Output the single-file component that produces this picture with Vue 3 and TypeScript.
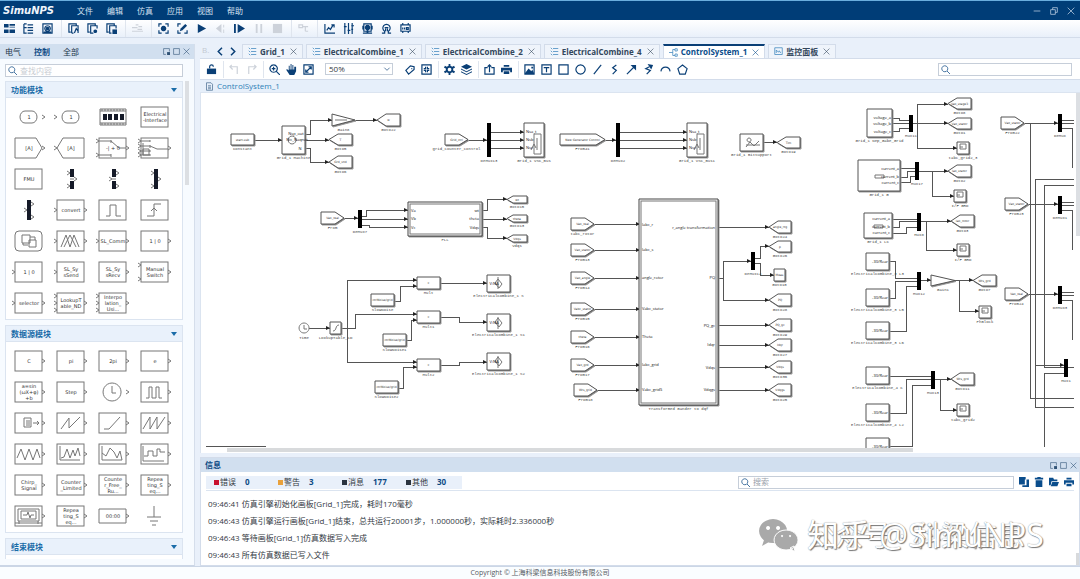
<script setup lang="ts">
import { ref } from 'vue'

interface Glyph { s?: string; f?: string }
interface Tile { t?: string[]; d?: string; f?: string; i?: number[]; o?: number[]; frame?: 'none' | 'round'; c?: boolean }
interface Block { k: string; x: number; y: number; w: number; h: number; t?: string; l?: string; lx?: number }
interface Note { x: number; y: number; t: string; a?: 'start' | 'middle' | 'end'; m?: boolean }

const glyphs: Record<string, Glyph> = {
  blocks: { f: 'M0 1h5v4H0zM6 1h6v2H6zM6 4h6v1H6zM0 7h5v4H0zM6 7h6v4H6z' },
  tree: { s: 'M1 1v10h3M1 5h3M5 2h6M5 5h6M5 8h6M5 11h6M1 1h3' },
  target: { s: 'M1 1h10v10H1zM6 3a3 3 0 1 0 .1 0M2 10h8', f: 'M6 4a2 2 0 1 0 .1 0z' },
  pageA: { s: 'M3 10H1V1h8v2M4 11V3h7v8M6 11H4M7 11l2-5 2 3' },
  pageB: { s: 'M3 10H1V1h8v2M11 6V3H4v8h3', f: 'M9 7a2 2 0 1 0 .1 0z' },
  pageC: { s: 'M3 10H1V1h8v2M11 6V3H4v8h2', f: 'M7 7h5v5H7z' },
  list: { s: 'M0 5h6M4 2h3M7 4h4M0 9h12M6 7h5' },
  gearBox: { s: 'M1 4V1h3M8 1h3v3M11 8v3H8M4 11H1V8', f: 'M6 3a3 3 0 1 0 .1 0z' },
  pencilBox: { s: 'M1 4V1h3M11 8v3H8M4 11H1V8', f: 'M3 9l1-3 5-5 2 2-5 5z' },
  play: { f: 'M2 1l9 5-9 5z' },
  back: { f: 'M7 1v10L1 6zM9 2h1v3H9zM9 7h1v4H9z' },
  step: { f: 'M0 1h2v10H0zM4 1l8 5-8 5z' },
  pause: { f: 'M3 1h2v10H3zM8 1h2v10H8z' },
  stop: { f: 'M1 1h10v10H1z' },
  flow: { s: 'M1 2h4v3H1zM5 4h3v5M8 4h3M8 9h3' },
  chart: { s: 'M1 1v10h11M3 8l2-3 2 2 3-5M8 2h3v3' },
  sliders: { s: 'M2 0v12M6 0v12M10 0v12M1 4h3M5 8h3M9 3h3M9 7h2' },
  monitor: { s: 'M2 1h8v8H2zM1 11h10M1 3v4M11 3v4', f: 'M6 2a3 3 0 1 0 .1 0zM5 8h2v3H5z' },
  magnet: { s: 'M1 11h3V9a4 4 0 1 1 4 0v2h3M5 9V6M7 9V6M4 5h4' },
  hd: { s: 'M1 2h10v7H1zM3 0v2M9 0v2M3 11V9M9 11V9M3 5v2M5 5v2M7 5h2v2H7z' },
  lock: { s: 'M4 5V3a2 2 0 0 1 4 0', f: 'M1 5h10v6H1z' },
  undo: { s: 'M3 1L1 3l3 3M1 3h8v8' },
  redo: { s: 'M9 1l2 2-3 3M11 3H3v8' },
  zoom: { s: 'M5 1a4 4 0 1 0 .1 0M8 8l4 4M3 5h4M5 3v4' },
  hand: { f: 'M3 2h1v4h1V0h1v6h1V1h1v5h1V3h2v5l-2 4H4L0 6l2 0 1 1z' },
  fit: { s: 'M1 1h10v10H1zM3 9l6-6M6 3h3v3M3 6v3h3' },
  tag: { s: 'M2 7l5-5 4 1 0 3-6 5zM8 5h1' },
  grid: { s: 'M1 1h10v10H1zM3 5h2V3M9 5H7V3M3 7h2v2M9 7H7v2' },
  gear: { f: 'M5 0h2v2l2 1 2-1 1 2-2 1v2l2 1-1 2-2-1-2 1v2H5v-2L3 9l-2 1-1-2 2-1V5L0 4l1-2 2 1 2-1zM6 4a2 2 0 1 0 .1 0z' },
  layers: { f: 'M6 0l6 3-6 3-6-3zM0 5l6 3 6-3v1L6 9 0 6zM0 8l6 3 6-3v1l-6 3-6-3z' },
  exportIcon: { s: 'M4 4H1v7h10V4H8M6 9V1M4 3l2-2 2 2' },
  print: { f: 'M3 1h6v2H3zM0 4h12v5h-2V7H2v2H0zM3 8h6v3H3z' },
  picture: { s: 'M1 1h10v10H1z', f: 'M1 10l4-5 3 3 1-2 2 4v1H1zM8 3h2v2H8z' },
  textIcon: { s: 'M1 1h10v10H1zM3 4h6M6 4v5' },
  rect: { s: 'M1 1h10v10H1z' },
  circle: { s: 'M6 1a5 5 0 1 0 .1 0z' },
  line: { s: 'M2 11l8-10' },
  curve: { s: 'M8 1L4 4l4 3-4 4' },
  arrow: { s: 'M1 11l8-8', f: 'M5 1h6v6z' },
  curveArrow: { s: 'M7 3L3 5l5 2-4 4', f: 'M5 0l6 1-2 5z' },
  arc: { s: 'M1 8c1-6 9-6 10 0' },
  pentagon: { s: 'M6 1l5 4-2 6H3L1 5z' },
  search: { s: 'M5 1a4 4 0 1 0 .1 0M8 8l4 4' },
  wave: { s: 'M4 2h7M4 6h7M4 10h7M1 1l2 2M1 5l2 2M1 9l2 2' },
  branch: { s: 'M0 6h5M5 2v8M5 2h3M5 10h3M8 1h3v3H8zM8 8h3v3H8z' },
  panelIcon: { s: 'M1 1h10v9H1zM3 8V4l3 3 1-2 2 3' },
  doc: { s: 'M2 1h6l2 2v8H2zM4 5h4M4 7h4M4 9h4' },
  close: { s: 'M1 1l10 10M11 1L1 11' },
  minimise: { s: 'M1 6h10' },
  restore: { s: 'M1 4h7v7H1zM4 4V1h7v7H8' },
  square: { s: 'M1 1h10v10H1z' },
  dock: { s: 'M5 11H1V1h10v5', f: 'M7 7h5v5H7z' },
  left: { s: 'M8 1L3 6l5 5' },
  right: { s: 'M4 1l5 5-5 5' },
  copy: { f: 'M0 0h8v3H7v6H0zM9 3h3v9H4v-2h5z' },
  trash: { f: 'M1 1h10v2H1zM4 0h4v1H4zM2 4h8v8H2z' },
  folder: { f: 'M0 1h5l1 2h4v2H3l-1 5H0zM4 6h8l-2 5H2z' },
}

const menus = ['文件', '编辑', '仿真', '应用', '视图', '帮助']
const mainTools: [string, number][][] = [
  [['blocks', 1], ['tree', 1], ['target', 1]],
  [['pageA', 1], ['pageB', 1], ['pageC', 1]],
  [['list', 0]],
  [['gearBox', 1], ['pencilBox', 1], ['play', 1], ['back', 0], ['step', 1], ['pause', 0], ['stop', 0]],
  [['flow', 0]],
  [['chart', 1], ['sliders', 1], ['monitor', 1], ['magnet', 1], ['hd', 1]],
]
const viewTools: [string, number][][] = [[['lock', 1]], [['undo', 0], ['redo', 0]], [['zoom', 1], ['hand', 1], ['fit', 1]]]
const drawTools: string[][] = [
  ['tag', 'grid'], ['gear', 'layers'], ['exportIcon', 'print'],
  ['picture', 'textIcon', 'rect', 'circle', 'line', 'curve', 'arrow', 'curveArrow', 'arc', 'pentagon'],
]
const tabs = [
  { name: 'Grid_1', icon: 'wave' },
  { name: 'ElectricalCombine_1', icon: 'wave' },
  { name: 'ElectricalCombine_2', icon: 'wave' },
  { name: 'ElectricalCombine_4', icon: 'wave' },
  { name: 'ControlSystem_1', icon: 'branch' },
  { name: '监控面板', icon: 'panelIcon' },
]
const activeTab = ref('ControlSystem_1')
const zoomLevel = ref('50%')

const functionTiles: Tile[] = [
  { t: ['1'], frame: 'none', d: 'M17 10h7a5 6 0 0 1 0 12h-7a5 6 0 0 1 0-12z', o: [16] },
  { t: ['1'], frame: 'none', d: 'M17 10h7a5 6 0 0 1 0 12h-7a5 6 0 0 1 0-12z', i: [16] },
  { frame: 'none', d: 'M8 8h26v16H8zM8 10h26M8 22h26M10 8v2M13 8v2M16 8v2M19 8v2M22 8v2M25 8v2M28 8v2M31 8v2M10 22v2M13 22v2M16 22v2M19 22v2M22 22v2M25 22v2M28 22v2M31 22v2', f: 'M11 13h4v6h-4zM16 13h4v6h-4zM22 13h4v6h-4zM28 13h4v6h-4z' },
  { t: ['Electrical', '-Interface'] },
  { t: ['[A]'], frame: 'none', d: 'M7 6h21l6 10-6 10H7z', o: [16] },
  { t: ['[A]'], frame: 'none', d: 'M34 6H13L7 16l6 10h21z', i: [16] },
  { t: ['-| + 0'], d: 'M7 9h12l8 7h7M7 23h12M19 8v3M19 22v3', i: [9, 23], o: [16] },
  { t: [], d: 'M7 9h9M7 14h9l7 3h11M7 19h9M7 23h9M9 11v12M9 17h6v6H9zM16 8v2M16 13v3M16 18v2M16 22v2', i: [9, 14, 19, 23], o: [16] },
  { t: ['FMU'] },
  { frame: 'none', f: 'M20 6h4v8h-4zM20 18h4v8h-4z', d: 'M20 16h4', c: true },
  { frame: 'none', f: 'M20 6h4v8h-4zM20 18h4v8h-4z', d: 'M20 16h4', c: true },
  { frame: 'none', f: 'M20 6h4v20h-4z', c: true },
  { frame: 'none', f: 'M19 6h4v20h-4z', c: true },
  { t: ['convert'], i: [16], o: [16] },
  { d: 'M14 22h4V11h6v11h5' },
  { d: 'M13 22h7V10h7M17 17l3-3 3 3' },
  { frame: 'round', d: 'M14 10h8v8h-8zM21 15h7v7h-7zM22 12h5v3M20 20h-5v-2' },
  { d: 'M11 22l5-12 4 12 4-12 5 12M14 22l6-12 6 12', i: [16], o: [16] },
  { t: ['SL_Comm'], i: [16], o: [16] },
  { t: ['1 | 0'], o: [16] },
  { t: ['1 | 0'], i: [16] },
  { t: ['SL_Sy', 'sSend'], i: [16] },
  { t: ['SL_Sy', 'sRecv'], o: [16] },
  { t: ['Manual', 'Switch'], i: [9, 23], o: [16] },
  { t: ['selector'], i: [16], o: [16] },
  { t: ['LookupT', 'able_ND'], i: [9, 16, 23], o: [16] },
  { t: ['Interpo', 'lation_', 'Usi...'], i: [9, 16, 23], o: [16] },
]
const sourceTiles: Tile[] = [
  { t: ['C'], o: [16] }, { t: ['pi'], o: [16] }, { t: ['2pi'], o: [16] }, { t: ['e'], o: [16] },
  { t: ['a=sin', '(ωX+φ)', '+b'], o: [16] }, { t: ['Step'], o: [16] },
  { frame: 'none', d: 'M20 7a9 9 0 1 0 .1 0zM20 10v7h4', o: [16] },
  { d: 'M12 22h3V11h3v11h4V11h3v11h3', o: [16] },
  { d: 'M16 11h7v9h-7zM18 14h4M18 16h4M18 18h4M25 16h6M29 14l2 2-2 2', o: [16] },
  { d: 'M11 22l8-11v10l11-11', o: [16] }, { d: 'M12 22h5l11-12', o: [16] },
  { d: 'M9 22l7-12v12l7-12v12l8-12', o: [16] },
  { d: 'M9 20l4-9 4 11 4-11 4 11 4-11 3 9', o: [16] },
  { d: 'M10 8v14h20M11 20l3-1 3-8 3 9 3-8 2 6 3-8 2 8', o: [16] },
  { d: 'M10 8v14h20M10 15l4 3 4-8 4 4 3 6 3-7 2 9', o: [16] },
  { d: 'M9 8v15h21M10 18h4v-5h5v5h4v-7h3v3h5', o: [16] },
  { t: ['Chirp_', 'Signal'], o: [16] }, { t: ['Counter', '_Limited'], o: [16] },
  { t: ['Counte', 'r_Free_', 'Ru...'], o: [16] }, { t: ['Repea', 'ting_S', 'eq...'], o: [16] },
  { d: 'M10 9h21v12H10zM13 11h15v8H13zM11 21v3M30 21v3M15 15h4l1-3 2 6 1-3h3M7 23h27', o: [16] },
  { t: ['Repea', 'ting_S', 'eq...'], o: [16] },
  { t: ['00:00'], frame: 'none', d: 'M7 9h27v14H7z', o: [16] },
  { frame: 'none', d: 'M20 6v11M13 17h14M16 21h8M18 25h4' },
]
const muxPorts: Record<number, string> = {
  9: 'M17 8l3 2-3 2M17 21l3 2-3 2M24 14l3 2-3 2',
  10: 'M17 14l3 2-3 2M24 8l3 2-3 2M24 21l3 2-3 2',
  11: 'M17 8l3 2-3 2M17 21l3 2-3 2M24 14l3 2-3 2',
  12: 'M16 14l3 2-3 2M23 8l3 2-3 2M23 21l3 2-3 2',
}
const libraries = [
  { name: '功能模块', tiles: functionTiles },
  { name: '数据源模块', tiles: sourceTiles },
  { name: '结束模块', tiles: [] as Tile[] },
]

const b = (k: string, x: number, y: number, w: number, h: number, t = '', l = ''): Block => ({ k, x, y, w, h, t, l })
const diagram: Block[] = [
  b('box', 231, 134, 23, 11, 'start-usb', 'Constant'), b('box', 282, 126, 23, 28, '', 'Grid_1 Machine'),
  b('gain', 332, 114, 23, 12, '', 'Gain8'), b('goto', 377, 114, 23, 12, 'w', 'Goto22'),
  b('goto', 329, 134, 23, 11, 'T', 'Goto5'), b('goto', 329, 156, 23, 12, 'Grd_vnd', 'Goto6'),
  b('from', 445, 134, 23, 11, 'Grid_ctrl', 'grid_counter_control'), b('bar', 487, 123, 4, 34, '', 'DeMux13'),
  b('box', 524, 123, 20, 34, '', 'Grid_1 VSC_Bus'), b('from', 560, 134, 45, 11, 'New Generator Control', 'From41'),
  b('bar', 616, 123, 4, 34, '', 'DeMux2'), b('box', 687, 123, 20, 34, '', 'Grid_1 VSC_Bus1'),
  b('box', 740, 134, 23, 17, '', 'Grid_1 BitSupport'), b('goto', 777, 137, 23, 11, 'Tim', 'Goto19'),
  b('from', 321, 212, 23, 12, 'Vao_real', 'From'), b('bar', 358, 210, 4, 18, '', 'DeMux7'),
  b('sub', 408, 202, 74, 34, '', 'PLL'), b('goto', 507, 196, 20, 7, 'wt', 'Goto15'),
  b('goto', 507, 215, 20, 7, 'theta', 'Goto13'), b('goto', 507, 235, 20, 7, 'Vdqs', 'Vdqs'),
  b('box', 330, 322, 11, 12, '', 'LookupTable_1D'),
  b('box', 417, 277, 23, 12, 'x', 'Mult'), b('box', 417, 311, 23, 12, 'x', 'Mult1'), b('box', 417, 359, 23, 12, 'x', 'Mult2'),
  b('box', 371, 294, 23, 12, 'ctrlNoise/grid', 'SlowNoise'), b('box', 383, 334, 23, 12, 'ctrlNoise/grid', 'SlowNoise1'),
  b('box', 375, 381, 23, 12, 'ctrlNoise/grid', 'SlowNoise2'),
  b('box', 487, 275, 23, 17, '', 'ElectricalCombine_1 S'), b('box', 487, 314, 23, 17, '', 'ElectricalCombine_1 S1'),
  b('box', 487, 353, 23, 17, '', 'ElectricalCombine_1 S2'),
  b('sub', 639, 199, 79, 206, '', 'Transformed Gander to dqf'),
  b('from', 571, 218, 23, 12, 'Vao_real', 'tabc_rotor'), b('from', 571, 244, 23, 12, 'Vao_stator', 'From13'),
  b('from', 571, 272, 23, 12, 'Vao_angle', 'From14'), b('from', 571, 303, 23, 12, 'Vabc_stator', 'From15'),
  b('from', 571, 331, 23, 12, 'theta', 'From16'), b('from', 571, 359, 23, 12, 'Vao_grd', 'From17'),
  b('from', 574, 384, 23, 12, 'Wrs_grid', 'From18'),
  b('goto', 769, 221, 22, 12, 'angle_rtg', 'Goto24'), b('goto', 769, 241, 22, 11, 'p', 'Goto26'),
  b('box', 774, 269, 11, 12, 'Meas', 'Goto10'), b('goto', 769, 294, 22, 12, 'PQ', 'Goto28'),
  b('goto', 769, 319, 22, 12, 'PQ_gc', 'Goto29'), b('goto', 769, 339, 22, 12, 'Idqr', 'Goto27'),
  b('goto', 769, 361, 22, 12, 'Vdqs', 'Goto36'), b('goto', 769, 384, 22, 12, 'Vdqgs', 'Goto25'),
  b('bar', 751, 252, 4, 18, '', 'DeMux14'),
  b('box', 867, 109, 25, 28, '', 'Grid_1 Nep_Gabe_Grid'), b('bar', 909, 115, 4, 17, '', 'Mux11'),
  b('goto', 948, 98, 23, 11, 'Vao_stage3', 'Goto8'), b('goto', 948, 118, 23, 11, 'Vao_stator', 'Goto1'),
  b('scope', 957, 142, 12, 12, '', 'tabc_grid2_3'),
  b('box', 858, 160, 42, 31, '', 'Grid_1 G'), b('bar', 915, 162, 4, 18, '', 'Mux17'),
  b('goto', 948, 165, 23, 12, 'Iao_stator', 'Goto2'), b('scope', 954, 190, 12, 12, '', 'I/F GRD'),
  b('box', 864, 213, 28, 25, '', 'Grid_1 LC'), b('bar', 917, 213, 4, 18, '', 'Mux8'),
  b('goto', 951, 215, 23, 12, 'Iao_rotor', 'Goto3'), b('scope', 957, 244, 12, 12, '', 'I/F GRD'),
  b('box', 866, 253, 23, 17, '', 'ElectricalCombine_3 L3'), b('box', 866, 289, 23, 17, '', 'ElectricalCombine_3 L5'),
  b('box', 866, 322, 23, 17, '', 'ElectricalCombine_3 L6'), b('box', 866, 367, 23, 17, '', 'ElectricalCombine_4 C'),
  b('box', 866, 404, 23, 17, '', 'ElectricalCombine_4 L2'), b('box', 866, 438, 23, 17),
  b('bar', 917, 272, 4, 18, '', 'Mux12'), b('gain', 931, 275, 24, 11, '', 'Gain1'),
  b('goto', 973, 275, 23, 11, 'Wrs_grd', 'Goto7'), b('scope', 979, 306, 12, 12, '', 'PhBlock'),
  b('bar', 931, 371, 4, 18, '', 'Mux13'), b('goto', 951, 373, 23, 12, 'Wrs_grd', 'Goto11'),
  b('scope', 957, 404, 12, 12, '', 'tabc_grid2'),
  b('from', 1001, 117, 23, 12, 'Vao_stator', 'From22'), b('bar', 1058, 114, 4, 18, '', 'DeMux'),
  b('from', 1005, 198, 23, 12, 'Vao_stator', 'From23'), b('bar', 1058, 196, 4, 18, '', 'DeMux1'),
  b('from', 1005, 288, 23, 12, 'Vao_real', 'From24'), b('bar', 1058, 286, 4, 18, '', 'DeMux3'),
  b('bar', 1064, 359, 4, 18, '', 'Mux1'),
]
const shape = (n: Block): string => {
  const { x, y, w, h } = n
  const p = Math.min(9, Math.round(h * 0.8))
  if (n.k === 'from') return `M${x} ${y}H${x + w - p}L${x + w} ${y + h / 2}L${x + w - p} ${y + h}H${x}Z`
  if (n.k === 'goto') return `M${x + w} ${y}H${x + p}L${x} ${y + h / 2}L${x + p} ${y + h}H${x + w}Z`
  if (n.k === 'gain') return `M${x} ${y}L${x + w} ${y + h / 2}L${x} ${y + h}Z`
  return `M${x} ${y}H${x + w}V${y + h}H${x}Z`
}
const wires = [
  'M254 140H282M305 134H310V120H332M305 140H329M305 148H310V162H329M355 120H377',
  'M468 140H487M491 132H524M491 140H524M491 148H524M605 140H616M620 132H687M620 140H687M620 148H687M763 142H777',
  'M344 218H358M362 216H366V210H408M362 219H408M362 225H369V227H408M482 210H487V199H507M482 219H507M482 227H487V238H507',
  'M309 328H330M341 328H355V314H417M347 280V362M347 280H417M347 362H417M394 301H400V286H417M406 340H411V320H417M398 388H403V367H417',
  'M440 283H487M440 317H459V322H487M440 365H459V362H487',
  'M594 224H640M594 250H640M594 278H640M594 309H640M594 337H640M594 365H640M597 390H640',
  'M718 227H769M718 278H723M723 261V300M723 261H751M755 258H760V246H769M755 263H760V275H774M723 300H769M718 325H769M718 345H769M718 367H769M718 390H769',
  'M892 118H899V120H909M892 123H909M892 131H899V128H909M913 123H948M917 104V148M917 104H948M917 148H957',
  'M900 168H915M900 177H907V171H915M900 182H910V176H915M919 171H948M932 171V196H954',
  'M892 219H917M892 227H899V221H917M892 233H906V227H917M921 221H951M926 221V250H957',
  'M889 261H895V278H917M889 298H895V281H917M889 331H906V286H917M921 280H931M955 280H973M959 280V311H979',
  'M889 376H931M889 413H906V379H931M889 446H912V385H931M935 379H951M940 379V410H957',
  'M1024 123H1058M1030 123V398H1074M1062 120H1074M1062 123H1074M1062 128H1072V168M1028 204H1058M1062 202H1074M1062 205H1074M1062 210H1072V250',
  'M1074 179H1035V407H1074M1074 185H1044V367H1064M1044 447V373H1064M1028 294H1058M1062 292H1074M1062 295H1074M1062 300H1072V340M1035 365H1064M1068 367H1074',
]
const heads = [
  [282, 140], [332, 120], [329, 140], [329, 162], [377, 120], [487, 140], [524, 132], [524, 140], [524, 148], [616, 140], [687, 132], [687, 140], [687, 148], [777, 142],
  [358, 218], [408, 210], [408, 219], [408, 227], [507, 199], [507, 219], [507, 238], [330, 328], [417, 280], [417, 286], [417, 314], [417, 320], [417, 362], [417, 367], [487, 283], [487, 322], [487, 362],
  [640, 224], [640, 250], [640, 278], [640, 309], [640, 337], [640, 365], [640, 390], [769, 227], [751, 261], [769, 246], [774, 275], [769, 300], [769, 325], [769, 345], [769, 367], [769, 390],
  [948, 104], [948, 123], [957, 148], [948, 171], [954, 196], [951, 221], [957, 250], [931, 280], [973, 280], [979, 311], [951, 379], [957, 410], [1058, 123], [1058, 204], [1058, 294], [1064, 365],
]
const notes: Note[] = [
  { x: 296, y: 135, t: 'Nsp_out' }, { x: 297, y: 141, t: 'Nic_Naqnet' }, { x: 300, y: 150, t: 'N' },
  ...[526, 689].flatMap((x): Note[] => [{ x, y: 133, t: 'Nsa_t', a: 'start' }, { x, y: 141, t: 'Nsb', a: 'start' }, { x, y: 149, t: 'Nsc', a: 'start' }]),
  { x: 411, y: 212, t: 'Va', a: 'start' }, { x: 411, y: 220, t: 'Vb', a: 'start' }, { x: 411, y: 229, t: 'Vc', a: 'start' },
  { x: 479, y: 212, t: 'wt', a: 'end' }, { x: 479, y: 220, t: 'theta', a: 'end' }, { x: 479, y: 229, t: 'Vdqs', a: 'end' },
  { x: 642, y: 226, t: 'Iabc_r', a: 'start' }, { x: 642, y: 251, t: 'Iabc_s', a: 'start' }, { x: 642, y: 279, t: 'angle_rotor', a: 'start' },
  { x: 642, y: 310, t: 'Vabc_stator', a: 'start' }, { x: 642, y: 338, t: 'Theta', a: 'start' }, { x: 642, y: 366, t: 'Iabc_grid', a: 'start' }, { x: 642, y: 391, t: 'Vabc_gridS', a: 'start' },
  { x: 715, y: 229, t: 'r_angle transformation', a: 'end' }, { x: 715, y: 279, t: 'PQ', a: 'end' }, { x: 715, y: 327, t: 'PQ_gc', a: 'end' },
  { x: 715, y: 346, t: 'Idqr', a: 'end' }, { x: 715, y: 369, t: 'Vdqs', a: 'end' }, { x: 715, y: 391, t: 'Vdqgs', a: 'end' },
  { x: 891, y: 119, t: 'voltage_a', a: 'end' }, { x: 891, y: 125, t: 'voltage_b', a: 'end' }, { x: 891, y: 133, t: 'voltage_c', a: 'end' },
  { x: 899, y: 170, t: 'current_a', a: 'end' }, { x: 899, y: 178, t: 'current_b', a: 'end' }, { x: 899, y: 184, t: 'current_c', a: 'end' },
  { x: 890, y: 220, t: 'current_a', a: 'end' }, { x: 890, y: 228, t: 'current_b', a: 'end' }, { x: 890, y: 234, t: 'current_c', a: 'end' },
  ...[263, 299, 332, 377, 414, 448].map((y): Note => ({ x: 888, y, t: '-30/Rear', a: 'end' })),
  ...[284, 323, 362].map((y): Note => ({ x: 494, y: y + 1, t: 'V:NA' })),
  { x: 304, y: 339, t: 'Time', m: true },
]
const details = [
  'M292 136a4 4 0 1 0 .1 0z', 'M534 134h7v20h-7zM537 138v12M531 150l3-6 2 4', 'M697 134h7v20h-7zM700 138v12M694 150l3-6 2 4',
  'M746 147l4-5 4 4 5-5M749 138a2 2 0 1 0 .1 0zM746 145h14', 'M304 323a5 5 0 1 0 .1 0zM304 325v4h3',
  'M333 331c4 0 2-6 6-6', 'M498 277v12M495 283l3-4 4 5-3 4z', 'M498 317v12M495 322l3-4 4 5-3 4z', 'M498 356v12M495 361l3-4 4 5-3 4z',
  'M875 175h9v3h-9z', 'M874 225h9v3h-9z', 'M335 120h12',
]

const counters = [
  { name: '错误', n: 0, tone: 'red' }, { name: '警告', n: 3, tone: 'amber' },
  { name: '消息', n: 177, tone: 'dark' }, { name: '其他', n: 30, tone: 'dark' },
]
const logs = [
  '09:46:41 仿真引擎初始化画板[Grid_1]完成，耗时170毫秒',
  '09:46:43 仿真引擎运行画板[Grid_1]结束，总共运行20001步，1.000000秒，实际耗时2.336000秒',
  '09:46:43 等待画板[Grid_1]仿真数据写入完成',
  '09:46:43 所有仿真数据已写入文件',
]
const logTools = ['copy', 'trash', 'folder', 'print']
const windowTools = ['minimise', 'restore', 'close']
const panelTools = ['dock', 'square', 'close']
</script>

<template>
  <div class="app">
    <header class="titlebar">
      <span class="logo">SimuNPS</span>
      <nav class="menu"><button v-for="m in menus" :key="m" type="button">{{ m }}</button></nav>
      <div class="window-tools">
        <button v-for="w in windowTools" :key="w" type="button" :aria-label="w">
          <svg viewBox="0 0 12 12"><path class="s" :d="glyphs[w].s" /></svg>
        </button>
      </div>
    </header>

    <div class="toolbar">
      <div v-for="(g, gi) in mainTools" :key="gi" class="group">
        <button v-for="[n, on] in g" :key="n" type="button" class="tool" :class="{ off: !on }" :aria-label="n">
          <svg viewBox="0 0 12 12"><path v-if="glyphs[n].f" class="f" :d="glyphs[n].f" /><path v-if="glyphs[n].s" class="s" :d="glyphs[n].s" /></svg>
        </button>
      </div>
    </div>

    <main class="work">
      <aside class="side">
        <div class="side-tabs">
          <button type="button">电气</button><button type="button" class="current">控制</button><button type="button">全部</button>
          <div class="panel-tools">
            <button v-for="p in panelTools" :key="p" type="button" :aria-label="p">
              <svg viewBox="0 0 12 12"><path v-if="glyphs[p].f" class="f" :d="glyphs[p].f" /><path class="s" :d="glyphs[p].s" /></svg>
            </button>
          </div>
        </div>
        <div class="side-body">
          <label class="search">
            <svg viewBox="0 0 12 12"><path class="s" :d="glyphs.search.s" /></svg>
            <input type="text" placeholder="查找内容" aria-label="查找内容" />
          </label>
          <div class="libs">
            <section v-for="lib in libraries" :key="lib.name" class="lib">
              <button type="button" class="lib-head"><span>{{ lib.name }}</span><i class="caret"></i></button>
              <div class="tiles">
                <svg v-for="(t, i) in lib.tiles" :key="i" class="tile" viewBox="0 0 42 31">
                  <rect v-if="!t.frame" class="s" x="7" y="6" width="27" height="20" />
                  <rect v-if="t.frame === 'round'" class="s" x="7" y="6" width="27" height="20" rx="4" />
                  <path v-if="t.d" class="s" :d="t.d" />
                  <path v-if="t.f" class="f" :d="t.f" />
                  <path v-if="t.c" class="s" :d="muxPorts[i]" />
                  <path v-for="y in t.i ?? []" :key="'i' + y" class="s" :d="`M4 ${y - 2}l3 2-3 2`" />
                  <path v-for="y in t.o ?? []" :key="'o' + y" class="s" :d="`M34 ${y - 2}l3 2-3 2`" />
                  <text v-for="(line, j) in t.t ?? []" :key="'t' + j" x="21" :y="18 + (j * 2 - (t.t ?? []).length + 1) * 3">{{ line }}</text>
                </svg>
              </div>
            </section>
            <i class="lib-bar"></i>
          </div>
        </div>
      </aside>

      <div class="right">
        <section class="editor">
          <div class="tabs">
            <span class="crumb-stub">B.</span>
            <button type="button" class="nav" aria-label="left"><svg viewBox="0 0 12 12"><path class="s" :d="glyphs.left.s" /></svg></button>
            <button type="button" class="nav" aria-label="right"><svg viewBox="0 0 12 12"><path class="s" :d="glyphs.right.s" /></svg></button>
            <button v-for="t in tabs" :key="t.name" type="button" class="tab" :class="{ active: t.name === activeTab }" @click="activeTab = t.name">
              <svg class="tab-icon" viewBox="0 0 12 12"><path class="s" :d="glyphs[t.icon].s" /></svg>
              <span>{{ t.name }}</span>
              <svg class="tab-close" viewBox="0 0 12 12"><path class="s" :d="glyphs.close.s" /></svg>
            </button>
          </div>
          <div class="canvas-tools">
            <div v-for="(g, gi) in viewTools" :key="gi" class="group">
              <button v-for="[n, on] in g" :key="n" type="button" class="tool" :class="{ off: !on }" :aria-label="n">
                <svg viewBox="0 0 12 12"><path v-if="glyphs[n].f" class="f" :d="glyphs[n].f" /><path v-if="glyphs[n].s" class="s" :d="glyphs[n].s" /></svg>
              </button>
            </div>
            <span class="zoom">
              <select v-model="zoomLevel" aria-label="zoom"><option>50%</option><option>100%</option></select>
              <svg viewBox="0 0 12 12"><path class="s" d="M2 4l4 4 4-4" /></svg>
            </span>
            <div v-for="(g, gi) in drawTools" :key="'d' + gi" class="group">
              <button v-for="n in g" :key="n" type="button" class="tool" :aria-label="n">
                <svg viewBox="0 0 12 12"><path v-if="glyphs[n].f" class="f" :d="glyphs[n].f" /><path v-if="glyphs[n].s" class="s" :d="glyphs[n].s" /></svg>
              </button>
            </div>
            <label class="search find">
              <svg viewBox="0 0 12 12"><path class="s" :d="glyphs.search.s" /></svg>
              <input type="text" aria-label="find" />
            </label>
          </div>
          <div class="path"><svg viewBox="0 0 12 12"><path class="s" :d="glyphs.doc.s" /></svg><a href="#">ControlSystem_1</a></div>
          <div class="canvas">
            <svg class="sheet">
              <g transform="translate(-201 -93)">
                <path v-for="(w, i) in wires" :key="'w' + i" class="wire" :d="w" />
                <path v-for="([x, y], i) in heads" :key="'h' + i" class="head" :d="`M${x} ${y}l-4 -2v4z`" />
                <g v-for="(n, i) in diagram" :key="i">
                  <path v-if="n.k !== 'bar'" class="shade" :d="shape(n)" transform="translate(1 1)" />
                  <path :class="n.k" :d="shape(n)" />
                  <rect v-if="n.k === 'sub'" class="inner" :x="n.x + 2" :y="n.y + 2" :width="n.w - 4" :height="n.h - 4" />
                  <path v-if="n.k === 'scope'" class="inner" :d="`M${n.x + 3} ${n.y + 2}h6v5h-6zM${n.x + 3} ${n.y + 5}h3`" />
                  <text v-if="n.t" class="tiny" :x="n.x + n.w / 2" :y="n.y + n.h / 2 + 1">{{ n.t }}</text>
                  <text v-if="n.l" class="label" :x="n.x + n.w / 2" :y="n.y + n.h + 5">{{ n.l }}</text>
                </g>
                <path v-for="(d, i) in details" :key="'x' + i" class="fine" :d="d" />
                <text v-for="(n, i) in notes" :key="'n' + i" :class="n.m ? 'label' : 'port'" :x="n.x" :y="n.y" :text-anchor="n.a ?? 'middle'">{{ n.t }}</text>
                <path class="wire" d="M206 446H266" />
              </g>
            </svg>
            <i class="vbar"></i>
            <i class="hbar"></i>
          </div>
        </section>

        <section class="info">
          <div class="info-head">
            <h2>信息</h2>
            <div class="panel-tools">
              <button v-for="p in panelTools" :key="p" type="button" :aria-label="p">
                <svg viewBox="0 0 12 12"><path v-if="glyphs[p].f" class="f" :d="glyphs[p].f" /><path class="s" :d="glyphs[p].s" /></svg>
              </button>
            </div>
          </div>
          <div class="info-bar">
            <div class="counts">
              <button v-for="c in counters" :key="c.name" type="button"><i :class="c.tone"></i><span>{{ c.name }}</span><b>{{ c.n }}</b></button>
            </div>
            <label class="search log-search">
              <svg viewBox="0 0 12 12"><path class="s" :d="glyphs.search.s" /></svg>
              <input type="text" placeholder="搜索" aria-label="搜索" />
            </label>
            <div class="log-tools">
              <button v-for="n in logTools" :key="n" type="button" :aria-label="n">
                <svg viewBox="0 0 12 12"><path class="f" :d="glyphs[n].f" /></svg>
              </button>
            </div>
          </div>
          <ul class="logs"><li v-for="l in logs" :key="l">{{ l }}</li></ul>
          <i class="log-bar"></i>
          <div class="mark">
            <svg viewBox="0 0 40 34">
              <path d="M15 1a14 12 0 1 0 .1 0zM6 22l-2 6 7-4z" />
              <path class="front" d="M28 12a12 10 0 1 0 .1 0zM32 30l5 4-1-6z" />
              <path class="eye" d="M10 8a2 2 0 1 0 .1 0zM20 8a2 2 0 1 0 .1 0zM24 17a1 1 0 1 0 .1 0zM32 17a1 1 0 1 0 .1 0z" />
            </svg>
            <div class="mark-text"><span class="under">公众号 · 科梁信息</span><span class="over">知乎 @SimuNPS</span></div>
          </div>
        </section>
      </div>
    </main>

    <footer class="footer">Copyright © 上海科梁信息科技股份有限公司</footer>
  </div>
</template>

<style>
html, body { margin: 0; height: 100%; }
#app { height: 100%; }
</style>

<style scoped>
.app { height: 100%; min-height: 560px; display: flex; flex-direction: column; overflow: hidden; background: #f3f8fe; color: #33393f; font: 8px/12px "Open Sans", "Noto Sans", "Noto Sans CJK SC", sans-serif; }
.app * { box-sizing: border-box; }
button { margin: 0; padding: 0; border: 0; background: none; color: inherit; font: inherit; display: flex; align-items: center; justify-content: center; }
svg { display: block; flex: none; }
.s { fill: none; stroke: currentColor; stroke-width: 1; }
.f { fill: currentColor; fill-rule: evenodd; }
.titlebar { height: 20px; flex: none; display: flex; align-items: center; background: #003d77; border-top: 1px solid #6aaede; color: #d5e3f2; }
.logo { width: 70px; padding-left: 3px; font: italic bold 10px/18px "DejaVu Sans", sans-serif; color: #eef4fb; }
.menu { display: flex; flex: 1; }
.menu button { width: 30px; }
.window-tools { display: flex; width: 52px; }
.window-tools button { flex: 1; }
.window-tools svg { width: 8px; height: 8px; }
.toolbar { height: 18px; flex: none; display: flex; background: linear-gradient(#ffffff, #e9f0fa); border-bottom: 1px solid #d3dcea; color: #0a3f76; }
.group { display: flex; align-items: center; }
.group + .group { border-left: 1px solid #dfe5ee; margin-left: 4px; padding-left: 2px; }
.tool { width: 19px; height: 17px; }
.tool svg { width: 11px; height: 11px; }
.tool .s { stroke-width: 1.3; }
.off { color: #cdd2da; }
.work { flex: 1; min-height: 0; display: flex; gap: 5px; padding-top: 6px; background: #e9f0fa; }
.side { width: 195px; flex: none; display: flex; flex-direction: column; background: #f7fbff; border-right: 1px solid #d5deeb; border-bottom: 1px solid #cbd6e6; min-height: 0; }
.side-tabs { height: 15px; flex: none; display: flex; align-items: center; padding: 0 4px 0 5px; gap: 13px; background: #d1dfef; color: #22354a; }
.side-tabs > .current { font-weight: bold; color: #0d4a84; }
.panel-tools { display: flex; margin-left: auto; gap: 3px; color: #2f5175; }
.panel-tools svg { width: 7px; height: 7px; }
.side-body { flex: 1; min-height: 0; display: flex; flex-direction: column; padding: 5px 5px 6px 5px; }
.search { display: flex; align-items: center; height: 13px; flex: none; padding: 0 2px; border: 1px solid #c6ced9; background: #fff; color: #0d4a84; }
.side-body .search { margin-right: 6px; }
.search svg { width: 9px; height: 9px; }
.search input { flex: 1; min-width: 0; border: 0; outline: 0; padding: 0 3px; background: none; font: inherit; height: 11px; }
.search input::placeholder { color: #c8ccd2; }
.libs { flex: 1; min-height: 0; overflow: hidden; margin-top: 4px; padding-right: 6px; position: relative; }
.lib { margin-bottom: 5px; border: 1px solid #dbe4f0; background: #fff; }
.lib-bar { position: absolute; right: 0; top: 0; width: 4px; height: 104px; background: #dcdfe3; }
.lib-head { width: 100%; height: 16px; justify-content: space-between; padding: 0 5px; background: #e9f1fb; border-bottom: 1px solid #dbe4f0; color: #1a6ca8; font-weight: bold; }
.caret { border: 3px solid transparent; border-top: 4px solid #1a6ca8; border-bottom: 0; }
.tiles { display: grid; grid-template-columns: repeat(4, 42px); padding: 3px 0 1px 2px; min-height: 6px; }
.tile { width: 42px; height: 31px; color: #555; }
.tile .f { fill: #151a28; }
.tile rect, .tile .s { stroke: #777; }
.tile text { font: 5px/6px "DejaVu Sans", sans-serif; fill: #333; text-anchor: middle; }
.right { flex: 1; min-width: 0; display: flex; flex-direction: column; gap: 4px; }
.editor { flex: 1; min-height: 0; display: flex; flex-direction: column; background: #fff; }
.tabs { height: 15px; flex: none; display: flex; align-items: stretch; background: #e9f0fa; color: #33475c; border-bottom: 1px solid #d3dcea; }
.crumb-stub { width: 14px; padding-left: 2px; color: #c3c9d2; }
.nav { width: 12px; color: #0a3f76; }
.nav svg { width: 9px; height: 9px; }
.nav .s { stroke-width: 2; }
.nav + .tab { margin-left: 4px; }
.tab { padding: 0 5px; margin-right: 3px; border: 1px solid #d3dcea; border-bottom: 0; background: #eff4fb; font-weight: bold; white-space: nowrap; }
.tab-icon { width: 9px; height: 9px; margin-right: 3px; color: #3d86bd; }
.tab-close { width: 7px; height: 7px; margin-left: 5px; }
.tab.active { background: #fff; color: #0a4d8c; border-top: 2px solid #0a3f76; }
.canvas-tools { height: 20px; flex: none; display: flex; align-items: center; padding: 0 8px 0 3px; color: #0a3f76; }
.canvas-tools .tool { width: 17px; }
.canvas-tools .group + .group { margin-left: 3px; }
.zoom { position: relative; width: 68px; margin: 0 8px; }
.zoom select { appearance: none; width: 100%; height: 12px; display: block; padding: 0 3px; border: 1px solid #c6ced9; border-radius: 0; background: #fff; font: inherit; line-height: 10px; color: #33393f; }
.zoom svg { position: absolute; right: 2px; top: 2px; width: 8px; height: 8px; pointer-events: none; }
.find { width: 134px; margin-left: auto; }
.path { height: 14px; flex: none; display: flex; align-items: center; gap: 3px; padding-left: 5px; background: #e6effa; border-top: 1px solid #d3dcea; border-bottom: 1px solid #dbe4f0; }
.path svg { width: 9px; height: 9px; color: #4f7194; }
.path a { color: #2e7fb8; text-decoration: none; }
.canvas { flex: 1; min-height: 0; position: relative; border-left: 1px solid #dbe4f0; padding: 0 5px 5px 0; }
.sheet { width: 100%; height: 100%; overflow: hidden; }
.vbar { position: absolute; right: 0; top: 0; width: 4px; height: 143px; background: #dcdfe3; }
.hbar { position: absolute; left: 3%; right: 19%; bottom: 1px; height: 4px; background: #d8dadc; }
.wire { fill: none; stroke: #555; stroke-width: 1; shape-rendering: crispEdges; }
.head { fill: #222; }
.shade { fill: #777; stroke: #999; }
.box, .from, .goto, .gain, .scope, .sub { fill: #fff; stroke: #555; stroke-width: 1; }
.sub { stroke: #444; }
.bar { fill: #000; }
.inner, .fine { fill: none; stroke: #777; stroke-width: 1; }
.tiny { font: 3px "DejaVu Sans", sans-serif; fill: #333; text-anchor: middle; }
.label { font: 4px "Liberation Mono", monospace; fill: #444; text-anchor: middle; }
.port { font: 4px "Open Sans", sans-serif; fill: #111; }
.info { height: 109px; flex: none; position: relative; background: #fff; border: 1px solid #d3dcea; overflow: hidden; }
.info-head { height: 14px; display: flex; align-items: center; padding: 0 2px 0 4px; background: #d1dfef; }
.info-head h2 { margin: 0; font: inherit; font-weight: bold; color: #0d4a84; }
.info-bar { display: flex; align-items: center; margin: 2px 5px 0; height: 17px; border-bottom: 1px solid #dbe4f0; }
.counts { display: flex; height: 13px; }
.counts button { width: 64px; justify-content: flex-start; padding-left: 8px; background: #e9f0fa; }
.counts i { width: 5px; height: 5px; margin-right: 1px; }
.counts b { margin-left: 9px; color: #0d4a84; }
.red { background: #c8102e; }
.amber { background: #e9a13b; }
.dark { background: #2b3440; }
.log-search { width: 276px; margin-left: auto; }
.log-search input::placeholder { color: #9aa1aa; }
.log-tools { display: flex; gap: 5px; margin-left: 5px; color: #0a4d8c; }
.log-tools svg { width: 10px; height: 10px; }
.logs { list-style: none; margin: 4px 0 0; padding: 0 7px; }
.logs li { line-height: 17px; white-space: nowrap; }
.log-bar { position: absolute; right: 0; bottom: 0; width: 3px; height: 12px; background: #d8dadc; }
.mark { position: absolute; right: 26px; bottom: 12px; display: flex; align-items: center; gap: 9px; }
.mark svg { width: 40px; height: 34px; fill: #a9a9a9; }
.mark .front { stroke: #fff; stroke-width: 1; }
.mark .eye { fill: #fff; }
.mark-text { display: grid; width: 246px; line-height: 36px; color: #fff; text-shadow: 1px 1px 1px #777, 0 0 1px #888; white-space: nowrap; }
.mark-text span { grid-area: 1 / 1; }
.under { font-size: 28px; }
.over { font-size: 32px; }
.footer { height: 13px; flex: none; text-align: center; background: #fafdff; border-top: 1px solid #cbd6e6; color: #555b63; font-size: 7px; }
</style>
